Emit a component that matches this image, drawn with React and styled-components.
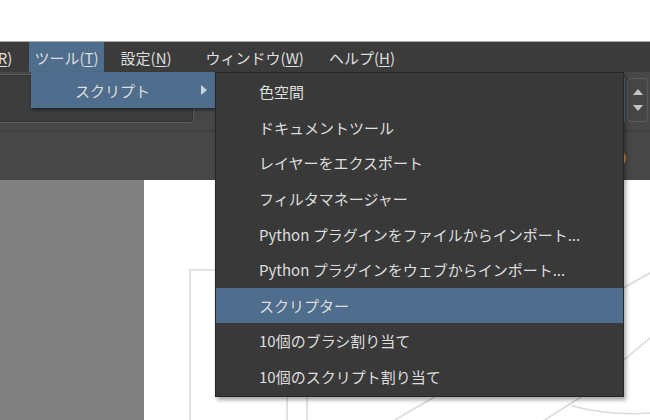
import React from "react";
import styled, { createGlobalStyle } from "styled-components";

const GlobalStyle = createGlobalStyle`
  html, body {
    margin: 0;
    padding: 0;
    background: #ffffff;
  }
  body {
    font-family: "Noto Sans CJK JP", "Noto Sans", sans-serif;
  }
`;

const menuItems = [
  "色空間",
  "ドキュメントツール",
  "レイヤーをエクスポート",
  "フィルタマネージャー",
  "Python プラグインをファイルからインポート...",
  "Python プラグインをウェブからインポート...",
  "スクリプター",
  "10個のブラシ割り当て",
  "10個のスクリプト割り当て",
];

const Window = styled.div`
  position: relative;
  margin-top: 41px;
  width: 650px;
  height: 379px;
  overflow: hidden;
  display: flex;
  flex-direction: column;
  background: #474747;
  color: #dedede;
  font-size: 15px;
`;

const MenuBar = styled.div`
  height: 30px;
  flex-shrink: 0;
  display: flex;
  align-items: stretch;
  gap: 12px;
  background: #3b3b3b;
  border-top: 1px solid #a9a9a9;
  white-space: nowrap;
`;

const MenuTitle = styled.div`
  display: flex;
  align-items: center;
  padding: 0 5px;
  margin-left: ${(p) => p.$offset || 0}px;
  background: ${(p) => (p.$active ? "#4f6d8c" : "transparent")};
  line-height: 1;

  u {
    text-underline-offset: 2px;
  }
`;

const ToolRow = styled.div`
  height: ${(p) => p.$height}px;
  flex-shrink: 0;
  display: flex;
  align-items: flex-start;
  justify-content: space-between;
  background: #474747;
  border-bottom: ${(p) => (p.$divider ? "2px solid #404040" : "none")};
`;

const FieldBox = styled.div`
  margin: 2px 0 0 -10px;
  width: 204px;
  height: 49px;
  box-sizing: border-box;
  background: #3c3c3c;
  border: 1px solid #5b5b5b;
  box-shadow: inset 0 0 0 1px #333;
  border-radius: 4px;
`;

const SpinGroup = styled.div`
  display: flex;
  align-items: stretch;
  margin-top: 6px;
  height: 44px;
`;

const FocusEdge = styled.div`
  width: 3px;
  background: #4a78a8;
  margin-right: 2px;
`;

const SpinBox = styled.div`
  width: 21px;
  box-sizing: border-box;
  margin-right: 2px;
  border: 1px solid #5a5a5a;
  border-radius: 4px;
  background: #454545;
  display: flex;
  flex-direction: column;
  align-items: center;
  justify-content: space-around;
  padding: 5px 0;
`;

const RowIcon = styled.svg`
  margin: 14px 22px 0 0;
`;

const Workspace = styled.div`
  flex: 1;
  display: flex;
`;

const Backdrop = styled.div`
  width: 144px;
  background: #808080;
`;

const Paper = styled.div`
  position: relative;
  flex: 1;
  background: #ffffff;
`;

const Sketch = styled.svg`
  position: absolute;
  inset: 0;
`;

const ToolsPopup = styled.div`
  position: absolute;
  left: 31px;
  top: 31px;
  width: 184px;
  height: 36px;
  box-sizing: border-box;
  padding: 0 8px 0 44px;
  display: flex;
  align-items: center;
  justify-content: space-between;
  background: #4f6d8c;
  box-shadow: 1px 2px 3px rgba(0, 0, 0, 0.45);
`;

const Popup = styled.div`
  position: absolute;
  left: 215px;
  top: 31px;
  width: 409px;
  box-sizing: border-box;
  padding: 1px 0 2px;
  background: #393939;
  border: 1px solid #262626;
  box-shadow: 2px 3px 4px rgba(0, 0, 0, 0.35);
`;

const PopupItem = styled.div`
  height: 35.6px;
  display: flex;
  align-items: center;
  padding-left: 43px;
  white-space: nowrap;
  line-height: 1;
  background: ${(p) => (p.$active ? "#4f6d8c" : "transparent")};
`;

const Triangle = ({ dir }) => (
  <svg width="12" height="8" viewBox="0 0 12 8">
    <polygon
      points={dir === "up" ? "1,7 11,7 6,1" : "1,1 11,1 6,7"}
      fill="#c4c4c4"
    />
  </svg>
);

const App = () => {
  return (
    <>
      <GlobalStyle />
      <Window>
        <MenuBar>
          <MenuTitle $offset={-72}>
            フィルタ(<u>R</u>)
          </MenuTitle>
          <MenuTitle $active>
            ツール(<u>T</u>)
          </MenuTitle>
          <MenuTitle>
            設定(<u>N</u>)
          </MenuTitle>
          <MenuTitle $offset={12}>
            ウィンドウ(<u>W</u>)
          </MenuTitle>
          <MenuTitle $offset={3}>
            ヘルプ(<u>H</u>)
          </MenuTitle>
        </MenuBar>

        <ToolRow $height={58} $divider>
          <FieldBox />
          <SpinGroup>
            <FocusEdge />
            <SpinBox>
              <Triangle dir="up" />
              <Triangle dir="down" />
            </SpinBox>
          </SpinGroup>
        </ToolRow>

        <ToolRow $height={48}>
          <span />
          <RowIcon width="24" height="24" viewBox="0 0 24 24">
            <circle cx="12" cy="12" r="9" fill="none" stroke="#d08a3a" strokeWidth="2" />
            <circle cx="12" cy="12" r="6" fill="none" stroke="#4a78a8" strokeWidth="1.5" />
          </RowIcon>
        </ToolRow>

        <Workspace>
          <Backdrop />
          <Paper>
            <Sketch width="506" height="241" viewBox="0 0 506 241">
              <g fill="none" stroke="#dadada" strokeWidth="1.6" strokeLinecap="round">
                <polyline points="120,90 46,90 46,241" />
                <line x1="143" y1="190" x2="143" y2="241" />
                <line x1="163" y1="190" x2="163" y2="241" />
                <line x1="249" y1="241" x2="330" y2="194" />
                <line x1="399" y1="241" x2="445" y2="212" />
                <path d="M428 226 Q468 236 506 233" />
                <line x1="440" y1="130" x2="506" y2="93" />
                <line x1="450" y1="205" x2="506" y2="158" />
              </g>
            </Sketch>
          </Paper>
        </Workspace>

        <ToolsPopup>
          <span>スクリプト</span>
          <svg width="6" height="10" viewBox="0 0 6 10">
            <polygon points="0,0 6,5 0,10" fill="#c9d3dd" />
          </svg>
        </ToolsPopup>

        <Popup>
          {menuItems.map((label) => (
            <PopupItem key={label} $active={label === "スクリプター"}>
              {label}
            </PopupItem>
          ))}
        </Popup>
      </Window>
    </>
  );
};

export default App;
